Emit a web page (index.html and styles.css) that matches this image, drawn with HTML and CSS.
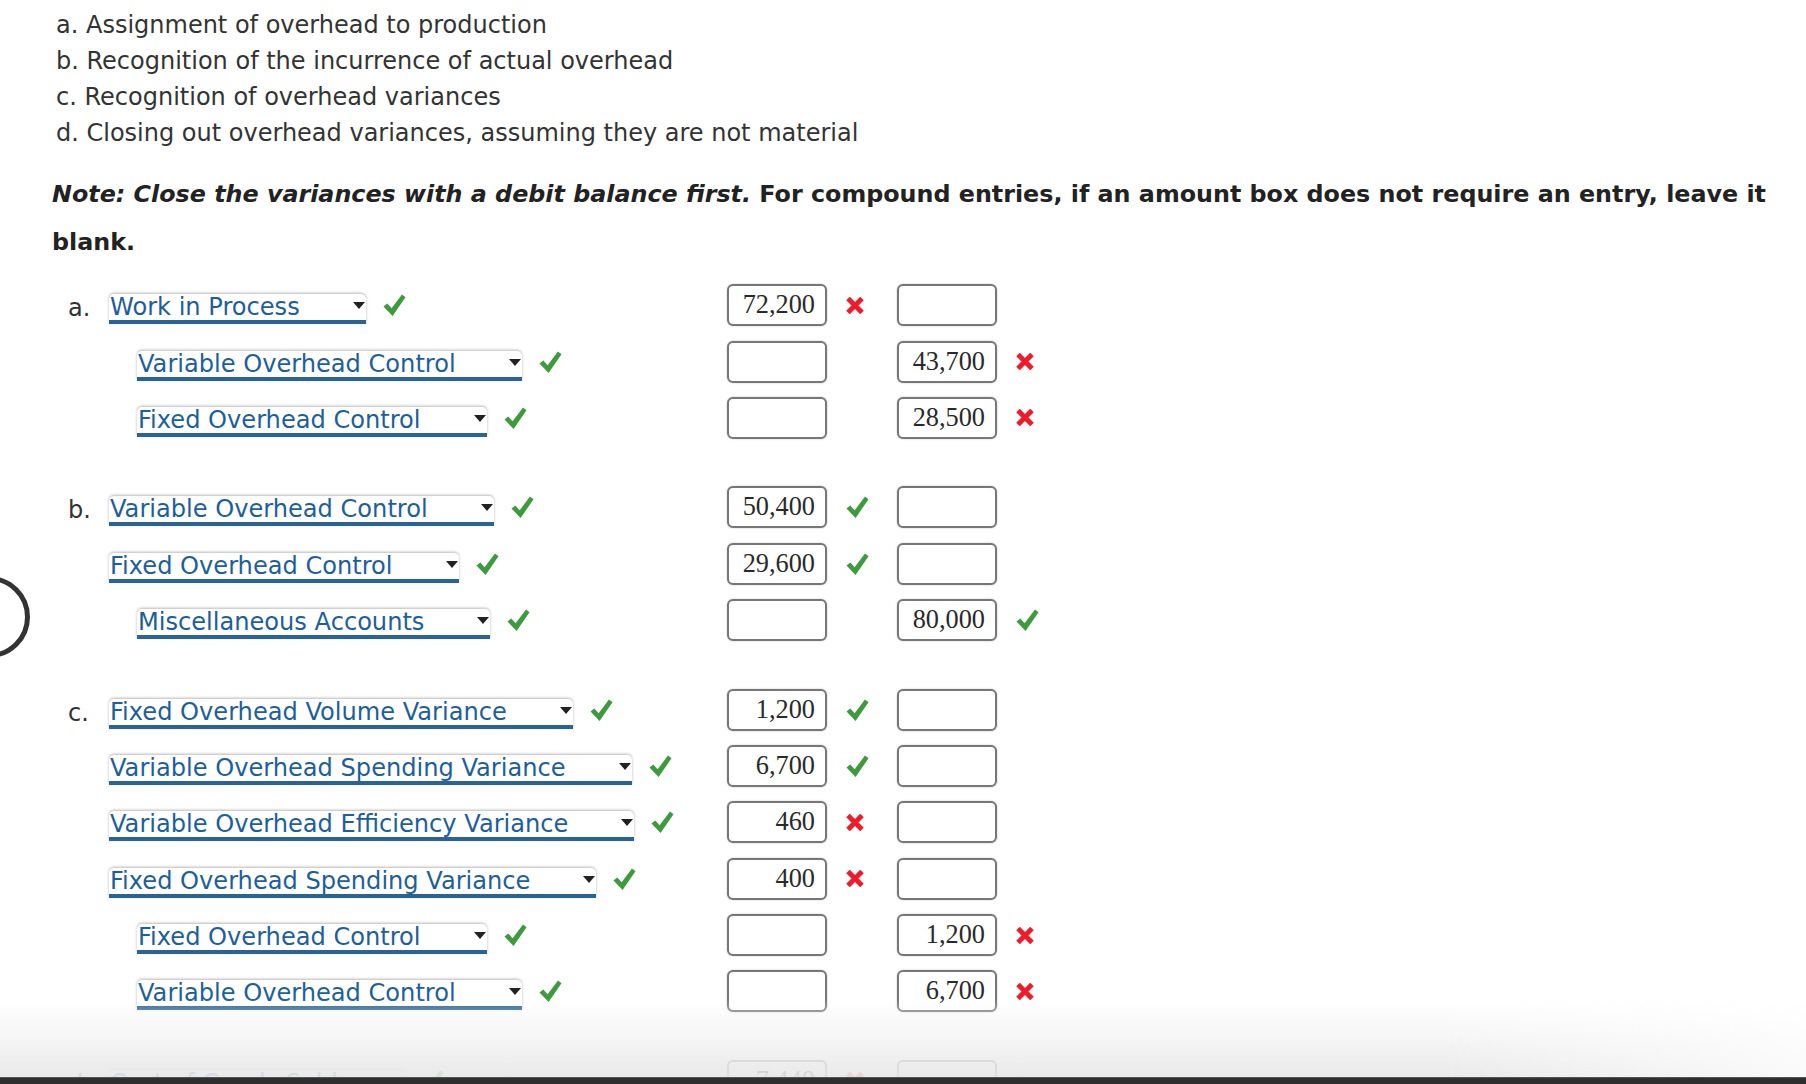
FILE: index.html
```html
<!DOCTYPE html>
<html lang="en">
<head>
<meta charset="utf-8">
<title>Overhead journal entries</title>
<link rel="stylesheet" href="styles.css">
</head>
<body>
<div class="page">
  <ul class="tasks">
    <li>a. Assignment of overhead to production</li>
    <li>b. Recognition of the incurrence of actual overhead</li>
    <li>c. Recognition of overhead variances</li>
    <li>d. Closing out overhead variances, assuming they are not material</li>
  </ul>
  <p class="note"><em>Note: Close the variances with a debit balance first.</em> For compound entries, if an amount box does not require an entry, leave it blank.</p>

  <div class="entries">
    <div class="group">
      <div class="row">
        <span class="label">a.</span>
        <div class="acct"><div class="select"><span>Work in Process</span><i class="caret"></i></div><svg class="ok" viewBox="0 0 24 24"><polygon points="0.5,13.5 4.5,10.5 9,15.5 19.8,1 23.5,4 10,23.5"/></svg></div>
        <input class="amt" type="text" value="72,200" readonly>
        <span class="m"><svg class="no" viewBox="0 0 18 17"><path d="M2 1.5 L16 15.5 M16 1.5 L2 15.5"/></svg></span>
        <input class="amt" type="text" value="" readonly>
        <span class="m"></span>
      </div>
      <div class="row">
        <span class="label"></span>
        <div class="acct indent"><div class="select"><span>Variable Overhead Control</span><i class="caret"></i></div><svg class="ok" viewBox="0 0 24 24"><polygon points="0.5,13.5 4.5,10.5 9,15.5 19.8,1 23.5,4 10,23.5"/></svg></div>
        <input class="amt" type="text" value="" readonly>
        <span class="m"></span>
        <input class="amt" type="text" value="43,700" readonly>
        <span class="m"><svg class="no" viewBox="0 0 18 17"><path d="M2 1.5 L16 15.5 M16 1.5 L2 15.5"/></svg></span>
      </div>
      <div class="row">
        <span class="label"></span>
        <div class="acct indent"><div class="select"><span>Fixed Overhead Control</span><i class="caret"></i></div><svg class="ok" viewBox="0 0 24 24"><polygon points="0.5,13.5 4.5,10.5 9,15.5 19.8,1 23.5,4 10,23.5"/></svg></div>
        <input class="amt" type="text" value="" readonly>
        <span class="m"></span>
        <input class="amt" type="text" value="28,500" readonly>
        <span class="m"><svg class="no" viewBox="0 0 18 17"><path d="M2 1.5 L16 15.5 M16 1.5 L2 15.5"/></svg></span>
      </div>
    </div>

    <div class="group">
      <div class="row">
        <span class="label">b.</span>
        <div class="acct"><div class="select"><span>Variable Overhead Control</span><i class="caret"></i></div><svg class="ok" viewBox="0 0 24 24"><polygon points="0.5,13.5 4.5,10.5 9,15.5 19.8,1 23.5,4 10,23.5"/></svg></div>
        <input class="amt" type="text" value="50,400" readonly>
        <span class="m"><svg class="ok" viewBox="0 0 24 24"><polygon points="0.5,13.5 4.5,10.5 9,15.5 19.8,1 23.5,4 10,23.5"/></svg></span>
        <input class="amt" type="text" value="" readonly>
        <span class="m"></span>
      </div>
      <div class="row">
        <span class="label"></span>
        <div class="acct"><div class="select"><span>Fixed Overhead Control</span><i class="caret"></i></div><svg class="ok" viewBox="0 0 24 24"><polygon points="0.5,13.5 4.5,10.5 9,15.5 19.8,1 23.5,4 10,23.5"/></svg></div>
        <input class="amt" type="text" value="29,600" readonly>
        <span class="m"><svg class="ok" viewBox="0 0 24 24"><polygon points="0.5,13.5 4.5,10.5 9,15.5 19.8,1 23.5,4 10,23.5"/></svg></span>
        <input class="amt" type="text" value="" readonly>
        <span class="m"></span>
      </div>
      <div class="row">
        <span class="label"></span>
        <div class="acct indent"><div class="select"><span>Miscellaneous Accounts</span><i class="caret"></i></div><svg class="ok" viewBox="0 0 24 24"><polygon points="0.5,13.5 4.5,10.5 9,15.5 19.8,1 23.5,4 10,23.5"/></svg></div>
        <input class="amt" type="text" value="" readonly>
        <span class="m"></span>
        <input class="amt" type="text" value="80,000" readonly>
        <span class="m"><svg class="ok" viewBox="0 0 24 24"><polygon points="0.5,13.5 4.5,10.5 9,15.5 19.8,1 23.5,4 10,23.5"/></svg></span>
      </div>
    </div>

    <div class="group">
      <div class="row">
        <span class="label">c.</span>
        <div class="acct"><div class="select"><span>Fixed Overhead Volume Variance</span><i class="caret"></i></div><svg class="ok" viewBox="0 0 24 24"><polygon points="0.5,13.5 4.5,10.5 9,15.5 19.8,1 23.5,4 10,23.5"/></svg></div>
        <input class="amt" type="text" value="1,200" readonly>
        <span class="m"><svg class="ok" viewBox="0 0 24 24"><polygon points="0.5,13.5 4.5,10.5 9,15.5 19.8,1 23.5,4 10,23.5"/></svg></span>
        <input class="amt" type="text" value="" readonly>
        <span class="m"></span>
      </div>
      <div class="row">
        <span class="label"></span>
        <div class="acct"><div class="select"><span>Variable Overhead Spending Variance</span><i class="caret"></i></div><svg class="ok" viewBox="0 0 24 24"><polygon points="0.5,13.5 4.5,10.5 9,15.5 19.8,1 23.5,4 10,23.5"/></svg></div>
        <input class="amt" type="text" value="6,700" readonly>
        <span class="m"><svg class="ok" viewBox="0 0 24 24"><polygon points="0.5,13.5 4.5,10.5 9,15.5 19.8,1 23.5,4 10,23.5"/></svg></span>
        <input class="amt" type="text" value="" readonly>
        <span class="m"></span>
      </div>
      <div class="row">
        <span class="label"></span>
        <div class="acct"><div class="select"><span>Variable Overhead Efficiency Variance</span><i class="caret"></i></div><svg class="ok" viewBox="0 0 24 24"><polygon points="0.5,13.5 4.5,10.5 9,15.5 19.8,1 23.5,4 10,23.5"/></svg></div>
        <input class="amt" type="text" value="460" readonly>
        <span class="m"><svg class="no" viewBox="0 0 18 17"><path d="M2 1.5 L16 15.5 M16 1.5 L2 15.5"/></svg></span>
        <input class="amt" type="text" value="" readonly>
        <span class="m"></span>
      </div>
      <div class="row">
        <span class="label"></span>
        <div class="acct"><div class="select"><span>Fixed Overhead Spending Variance</span><i class="caret"></i></div><svg class="ok" viewBox="0 0 24 24"><polygon points="0.5,13.5 4.5,10.5 9,15.5 19.8,1 23.5,4 10,23.5"/></svg></div>
        <input class="amt" type="text" value="400" readonly>
        <span class="m"><svg class="no" viewBox="0 0 18 17"><path d="M2 1.5 L16 15.5 M16 1.5 L2 15.5"/></svg></span>
        <input class="amt" type="text" value="" readonly>
        <span class="m"></span>
      </div>
      <div class="row">
        <span class="label"></span>
        <div class="acct indent"><div class="select"><span>Fixed Overhead Control</span><i class="caret"></i></div><svg class="ok" viewBox="0 0 24 24"><polygon points="0.5,13.5 4.5,10.5 9,15.5 19.8,1 23.5,4 10,23.5"/></svg></div>
        <input class="amt" type="text" value="" readonly>
        <span class="m"></span>
        <input class="amt" type="text" value="1,200" readonly>
        <span class="m"><svg class="no" viewBox="0 0 18 17"><path d="M2 1.5 L16 15.5 M16 1.5 L2 15.5"/></svg></span>
      </div>
      <div class="row">
        <span class="label"></span>
        <div class="acct indent"><div class="select"><span>Variable Overhead Control</span><i class="caret"></i></div><svg class="ok" viewBox="0 0 24 24"><polygon points="0.5,13.5 4.5,10.5 9,15.5 19.8,1 23.5,4 10,23.5"/></svg></div>
        <input class="amt" type="text" value="" readonly>
        <span class="m"></span>
        <input class="amt" type="text" value="6,700" readonly>
        <span class="m"><svg class="no" viewBox="0 0 18 17"><path d="M2 1.5 L16 15.5 M16 1.5 L2 15.5"/></svg></span>
      </div>
    </div>

    <div class="group">
      <div class="row">
        <span class="label">d.</span>
        <div class="acct"><div class="select"><span>Cost of Goods Sold</span><i class="caret"></i></div><svg class="ok" viewBox="0 0 24 24"><polygon points="0.5,13.5 4.5,10.5 9,15.5 19.8,1 23.5,4 10,23.5"/></svg></div>
        <input class="amt" type="text" value="7,440" readonly>
        <span class="m"><svg class="no" viewBox="0 0 18 17"><path d="M2 1.5 L16 15.5 M16 1.5 L2 15.5"/></svg></span>
        <input class="amt" type="text" value="" readonly>
        <span class="m"></span>
      </div>
    </div>
  </div>
</div>
<div class="ring"></div>
<div class="fade"></div>
<div class="bar"></div>
</body>
</html>
```
FILE: styles.css
```css
html, body {
  margin: 0;
  padding: 0;
  background: #fff;
  height: 1084px;
  overflow: hidden;
}
body {
  font-family: "DejaVu Sans", Verdana, sans-serif;
  color: #333;
  position: relative;
}
.page {
  padding: 7px 16px 0 56px;
}
.tasks {
  list-style: none;
  margin: 0;
  padding: 0;
  font-size: 24px;
  line-height: 36px;
  color: #333;
}
.note {
  margin: 19px 0 0 -4px;
  font-size: 23.8px;
  line-height: 48px;
  font-weight: bold;
  color: #222;
}
.note em {
  font-style: italic;
}
.entries {
  margin-top: 11px;
}
.group {
  margin-bottom: 33px;
}
.row {
  display: grid;
  grid-template-columns: 53px 618px 100px 70px 100px 60px;
  align-items: center;
  height: 56.4px;
}
.label {
  padding-left: 12px;
  font-size: 24px;
  color: #333;
  margin-top: 6px;
}
.acct {
  display: flex;
  align-items: center;
  gap: 17px;
}
.acct.indent {
  margin-left: 28px;
}
.select {
  position: relative;
  display: inline-flex;
  align-items: center;
  height: 26px;
  padding: 0 66px 0 1px;
  margin-top: 8px;
  background: #fff;
  border-bottom: 4px solid #2a6496;
  border-radius: 5px 5px 0 0;
  box-shadow: 0 -1px 3px rgba(0, 0, 0, 0.28);
  font-size: 24.1px;
  color: #1c5f9c;
  white-space: nowrap;
}
.caret {
  position: absolute;
  right: 1px;
  top: 8px;
  width: 0;
  height: 0;
  border-left: 6px solid transparent;
  border-right: 6px solid transparent;
  border-top: 7px solid #222;
}
.ok {
  width: 23px;
  height: 24px;
  fill: #3d9a3d;
  flex: none;
}
.no {
  width: 18px;
  height: 17px;
  stroke: #ee1c2a;
  stroke-width: 5;
  fill: none;
}
.m {
  display: flex;
  align-items: center;
  padding-left: 19px;
}
.amt {
  box-sizing: border-box;
  width: 100px;
  height: 42px;
  margin: 0;
  padding: 0 10px 0 4px;
  border: 2px solid #777;
  border-radius: 6px;
  box-shadow: 0 0 2px rgba(0, 0, 0, 0.25);
  background: #fff;
  font-family: "Liberation Serif", "Times New Roman", serif;
  font-size: 26.3px;
  color: #2a2a2a;
  text-align: right;
  outline: none;
}
.ring {
  position: absolute;
  left: -52px;
  top: 576px;
  width: 72px;
  height: 72px;
  border: 5px solid #333;
  border-radius: 50%;
}
.fade {
  position: absolute;
  left: 0;
  right: 0;
  bottom: 6px;
  height: 80px;
  background: linear-gradient(to bottom, rgba(255,255,255,0) 0%, rgba(244,244,244,0.75) 45%, rgba(232,232,232,0.92) 100%);
  -webkit-mask-image: linear-gradient(to right, #000 80%, rgba(0,0,0,0.25) 100%);
  mask-image: linear-gradient(to right, #000 80%, rgba(0,0,0,0.25) 100%);
}
.bar {
  position: absolute;
  left: 0;
  right: 0;
  bottom: 0;
  height: 6px;
  background: #2e2e2e;
  border-top: 1px solid #555;
}
```
